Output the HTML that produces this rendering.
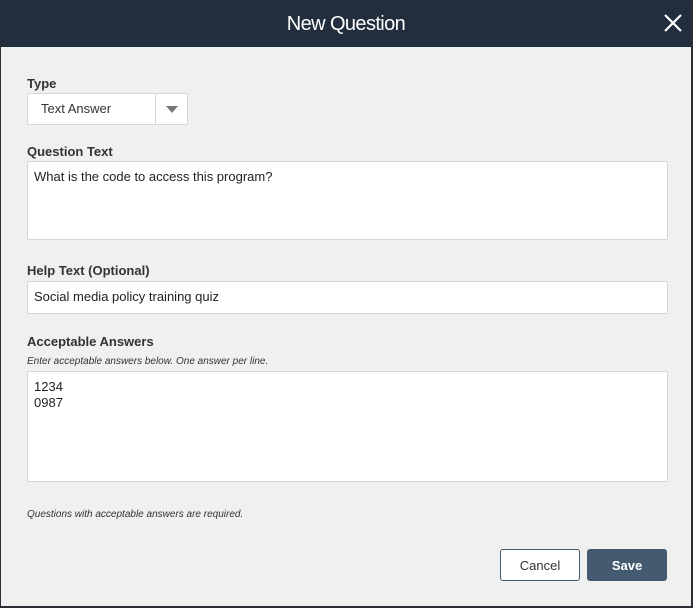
<!DOCTYPE html>
<html><head><style>
*{box-sizing:border-box;margin:0;padding:0}
body{width:693px;height:608px;background:#2a2f36;font-family:"Liberation Sans",sans-serif;overflow:hidden;position:relative}
.m{position:absolute;left:1px;top:0;width:690px;height:606px;background:#f0f0f0}
.h{position:absolute;left:0;top:0;width:690px;height:47px;background:#222e3e;color:#fff;font-size:20px;text-align:center;line-height:49px;letter-spacing:-0.6px}
.x{position:absolute;right:8px;top:13px}
.l{position:absolute;left:26px;font-size:13px;font-weight:bold;color:#333}
.f{position:absolute;left:26px;width:641px;background:#fff;border:1px solid #d6d6d6;border-radius:2px;font-size:13px;color:#222;padding:7px 6px;line-height:16px}
.s{position:absolute;left:26px;top:93px;width:161px;height:32px;background:#fff;border:1px solid #d6d6d6;border-radius:2px;font-size:13px;color:#333;line-height:30px;padding-left:13px}
.s .d{position:absolute;left:127px;top:0;height:30px;border-left:1px solid #d6d6d6;width:33px}
.s .d:after{content:"";position:absolute;left:10px;top:12px;border-left:6px solid transparent;border-right:6px solid transparent;border-top:7px solid #777}
.i{position:absolute;left:26px;font-size:10px;font-style:italic;color:#333}
.b{position:absolute;top:549px;width:80px;height:32px;border-radius:3px;font-size:13px;text-align:center;line-height:31px}
</style></head><body>
<div class="m">
<div class="h">New Question
<svg class="x" width="20" height="20" viewBox="0 0 20 20"><path d="M2 2L18 18M18 2L2 18" stroke="#fff" stroke-width="2.2"/></svg></div>
<div class="l" style="top:76px">Type</div>
<div class="s">Text Answer<div class="d"></div></div>
<div class="l" style="top:144px">Question Text</div>
<div class="f" style="top:161px;height:79px">What is the code to access this program?</div>
<div class="l" style="top:263px">Help Text (Optional)</div>
<div class="f" style="top:281px;height:33px">Social media policy training quiz</div>
<div class="l" style="top:334px">Acceptable Answers</div>
<div class="i" style="top:356px">Enter acceptable answers below. One answer per line.</div>
<div class="f" style="top:371px;height:111px">1234<br>0987</div>
<div class="i" style="top:509px">Questions with acceptable answers are required.</div>
<div class="b" style="left:499px;background:#fff;border:1px solid #445a70;color:#333">Cancel</div>
<div class="b" style="left:586px;background:#435a71;border:1px solid #435a71;color:#fff;font-weight:bold">Save</div>
</div>
</body></html>
